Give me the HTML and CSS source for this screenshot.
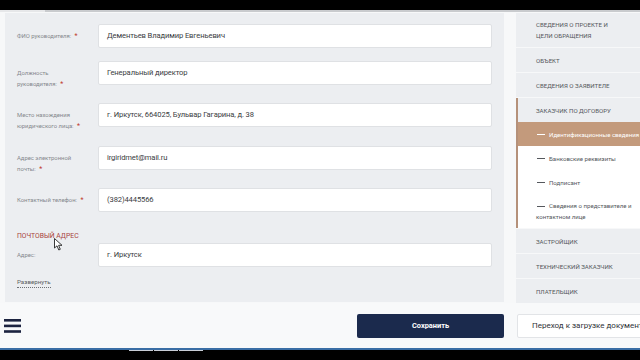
FILE: index.html
```html
<!DOCTYPE html>
<html lang="ru">
<head>
<meta charset="utf-8">
<title>Заказчик по договору</title>
<link rel="stylesheet" href="styles.css">
</head>
<body>
<div class="screen">
  <div class="topbar"></div>
  <div class="topline"></div>
  <div class="main">
    <section class="form-panel">
      <div class="row">
        <label class="label">ФИО руководителя: <span class="req">*</span></label>
        <div class="input">Дементьев Владимир Евгеньевич</div>
      </div>
      <div class="row row--compact">
        <label class="label">Должность<br>руководителя: <span class="req">*</span></label>
        <div class="input">Генеральный директор</div>
      </div>
      <div class="row">
        <label class="label">Место нахождения<br>юридического лица: <span class="req">*</span></label>
        <div class="input">г. Иркутск, 664025, Бульвар Гагарина, д. 38</div>
      </div>
      <div class="row row--loose">
        <label class="label">Адрес электронной<br>почты: <span class="req">*</span></label>
        <div class="input">irgiridmet@mail.ru</div>
      </div>
      <div class="row">
        <label class="label">Контактный телефон: <span class="req">*</span></label>
        <div class="input">(382)4445566</div>
      </div>
      <h3 class="section-title">Почтовый адрес</h3>
      <div class="row row--after-title">
        <label class="label">Адрес:</label>
        <div class="input">г. Иркутск</div>
      </div>
      <a class="expand">Развернуть</a>
      <svg class="cursor" width="9" height="13" viewBox="0 0 9 13"><path d="M0.5 0.5 L0.5 10 L3 7.8 L4.8 12 L6.3 11.3 L4.6 7.3 L8 7.3 Z" fill="#fff" stroke="#222" stroke-width="0.9" stroke-linejoin="round"/></svg>
    </section>
    <nav class="sidebar">
      <div class="nav-item nav-item--tall"><span class="nav-text">Сведения о проекте и<br>цели обращения</span><svg class="chev" width="8" height="5" viewBox="0 0 8 5"><path d="M0.5 0.5 L4 4 L7.5 0.5" fill="none" stroke="#888" stroke-width="0.9"/></svg></div>
      <div class="nav-item"><span class="nav-text">Объект</span><svg class="chev" width="8" height="5" viewBox="0 0 8 5"><path d="M0.5 0.5 L4 4 L7.5 0.5" fill="none" stroke="#888" stroke-width="0.9"/></svg></div>
      <div class="nav-item"><span class="nav-text">Сведения о заявителе</span><svg class="chev" width="8" height="5" viewBox="0 0 8 5"><path d="M0.5 0.5 L4 4 L7.5 0.5" fill="none" stroke="#888" stroke-width="0.9"/></svg></div>
      <div class="nav-group">
        <div class="nav-item nav-item--open"><span class="nav-text">Заказчик по договору</span><svg class="chev" width="8" height="5" viewBox="0 0 8 5"><path d="M0.5 4.5 L4 1 L7.5 4.5" fill="none" stroke="#888" stroke-width="0.9"/></svg></div>
        <div class="sub-item sub-item--active"><span class="dash"></span>Идентификационные сведения</div>
        <div class="sub-item"><span class="dash"></span>Банковские реквизиты</div>
        <div class="sub-item"><span class="dash"></span>Подписант</div>
        <div class="sub-item sub-item--tall"><span class="dash"></span>Сведения о представителе и<br>контактном лице</div>
      </div>
      <div class="nav-item"><span class="nav-text">Застройщик</span><svg class="chev" width="8" height="5" viewBox="0 0 8 5"><path d="M0.5 0.5 L4 4 L7.5 0.5" fill="none" stroke="#888" stroke-width="0.9"/></svg></div>
      <div class="nav-item"><span class="nav-text">Технический заказчик</span><svg class="chev" width="8" height="5" viewBox="0 0 8 5"><path d="M0.5 0.5 L4 4 L7.5 0.5" fill="none" stroke="#888" stroke-width="0.9"/></svg></div>
      <div class="nav-item"><span class="nav-text">Плательщик</span><svg class="chev" width="8" height="5" viewBox="0 0 8 5"><path d="M0.5 0.5 L4 4 L7.5 0.5" fill="none" stroke="#888" stroke-width="0.9"/></svg></div>
    </nav>
  </div>
  <footer class="footer">
    <svg class="burger" width="17" height="14" viewBox="0 0 17 14"><rect x="0" y="0" width="17" height="2.6" fill="#1c2340"/><rect x="0" y="5.6" width="17" height="2.6" fill="#1c2340"/><rect x="0" y="11.2" width="17" height="2.6" fill="#1c2340"/></svg>
    <button class="btn btn--primary">Сохранить</button>
    <button class="btn btn--secondary">Переход к загрузке документации</button>
  </footer>
  <div class="taskbar">
    <span class="task"></span><span class="task"></span><span class="task"></span>
  </div>
</div>
</body>
</html>
```

FILE: styles.css
```css
* { box-sizing: border-box; }
html, body {
  margin: 0;
  padding: 0;
  width: 640px;
  height: 360px;
  overflow: hidden;
  background: #000;
  font-family: Roboto, "Noto Sans", "Liberation Sans", sans-serif;
}
.screen {
  width: 640px;
  height: 360px;
  display: flex;
  flex-direction: column;
  overflow: hidden;
}
.topbar {
  height: 10px;
  background: #000;
  flex: none;
}
.topline {
  height: 2px;
  background: linear-gradient(to right, #e6e7e9 0, #e6e7e9 45px, #c9cbce 45px);
  flex: none;
}
.main {
  height: 291px;
  flex: none;
  display: flex;
  background: #f7f8f9;
  padding: 1px 0 0 5px;
  gap: 12px;
}
.form-panel {
  position: relative;
  width: 499px;
  flex: none;
  height: 289px;
  background: #eceef1;
  padding: 11px 12px 0 12px;
  display: flex;
  flex-direction: column;
}
.row {
  display: flex;
  align-items: flex-start;
  height: 24px;
  flex: none;
  margin-top: 18px;
}
.row:first-child { margin-top: 0; }
.row--compact { margin-top: 13px; }
.row--loose { margin-top: 19px; }
.row--after-title { margin-top: 2px; }
.label {
  width: 81px;
  flex: none;
  padding: 7px 0 0 0;
  font-size: 5.9px;
  line-height: 11.2px;
  color: #85888d;
  white-space: nowrap;
}
.req {
  color: #c0392b;
  font-size: 7px;
  padding-left: 2px;
}
.input {
  width: 394px;
  height: 24px;
  background: #fff;
  border: 1px solid #dfe1e4;
  border-radius: 2px;
  padding: 0 8px;
  font-size: 7.6px;
  letter-spacing: -0.12px;
  line-height: 22px;
  color: #3a3d42;
}
.section-title {
  margin: 19px 0 0 0;
  font-size: 6.8px;
  line-height: 10px;
  font-weight: 400;
  text-transform: uppercase;
  color: #a8433c;
}
.expand {
  margin-top: 11px;
  align-self: flex-start;
  font-size: 6.2px;
  line-height: 9px;
  color: #5b5e63;
  border-bottom: 1px dotted #6d7075;
}
.cursor {
  position: absolute;
  left: 49px;
  top: 225px;
}
.sidebar {
  width: 132px;
  flex: none;
  height: 289px;
  display: flex;
  flex-direction: column;
  gap: 1px;
  background: #f7f8f9;
}
.nav-item {
  position: relative;
  height: 24px;
  background: #eceef1;
  display: flex;
  align-items: center;
  padding: 0 22px 0 20px;
  font-size: 6.1px;
  line-height: 11px;
  text-transform: uppercase;
  color: #55585d;
  white-space: nowrap;
  flex: none;
}
.nav-item--tall { height: 34px; }
.chev {
  position: absolute;
  right: 0;
  top: 50%;
  margin-top: -2px;
}
.nav-group {
  border-left: 2px solid #b5917a;
  display: flex;
  flex-direction: column;
  background: #fff;
  flex: none;
}
.nav-item--open {
  padding-left: 18px;
}
.sub-item {
  height: 24px;
  display: flex;
  align-items: center;
  padding: 0 0 0 19px;
  font-size: 6.1px;
  line-height: 11px;
  color: #55585d;
  background: #fff;
  white-space: nowrap;
}
.dash {
  display: inline-block;
  width: 8px;
  height: 1px;
  background: currentColor;
  margin-right: 4px;
  vertical-align: middle;
  flex: none;
}
.sub-item--active {
  background: #c39a7c;
  color: #fff;
}
.sub-item--tall {
  height: 34px;
  display: block;
  padding-top: 6px;
  padding-left: 18px;
}
.sub-item--tall .dash { margin-left: 1px; }
.footer {
  height: 45px;
  flex: none;
  background: #f8f9fa;
  display: flex;
  align-items: center;
  padding-left: 4px;
}
.burger { flex: none; }
.btn {
  height: 24px;
  border-radius: 2px;
  font-family: Roboto, "Noto Sans", "Liberation Sans", sans-serif;
  flex: none;
  cursor: pointer;
}
.btn--primary {
  margin-left: 336px;
  width: 147px;
  background: #1b2a4d;
  color: #fff;
  border: none;
  font-size: 7.4px;
  font-weight: 700;
}
.btn--secondary {
  margin-left: 13px;
  width: 150px;
  background: #fff;
  border: 1px solid #e2e4e7;
  color: #2f3237;
  font-size: 8px;
  text-align: left;
  padding: 0 0 0 14px;
  white-space: nowrap;
  overflow: hidden;
}
.taskbar {
  height: 12px;
  flex: none;
  background: #000;
  border-top: 2px solid #3a6ea5;
  display: flex;
  padding-left: 129px;
  gap: 1px;
}
.task {
  width: 24px;
  height: 1px;
  background: #c9ced6;
}
```
